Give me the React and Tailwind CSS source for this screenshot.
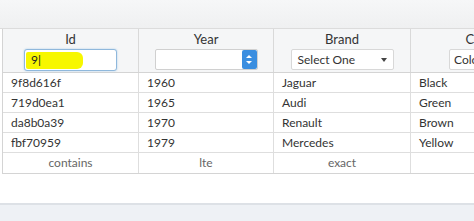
import React from "react";

const rows = [
  ["9f8d616f", "1960", "Jaguar", "Black"],
  ["719d0ea1", "1965", "Audi", "Green"],
  ["da8b0a39", "1970", "Renault", "Brown"],
  ["fbf70959", "1979", "Mercedes", "Yellow"],
];

const cols = "grid grid-cols-[136px_135px_137px_140px]";

export default function App() {
  return (
    <div className="w-[474px] h-[221px] overflow-hidden bg-white flex flex-col" style={{ fontFamily: "Lato, 'Open Sans', sans-serif" }}>
      <div className="h-[29px] shrink-0 bg-gradient-to-b from-[#f6f7f8] to-[#eff0f1] border-b border-[#dcdcdc]" />
      <div className="pl-[2px]">
        <div className="w-[560px] border-l border-[#d4d4d4]">
          <div className={`${cols} h-[44px] bg-[#f5f6f7] border-b border-[#d4d4d4]`}>
            <div className="flex flex-col items-center border-r border-[#d9d9d9] pt-[3px]">
              <div className="text-[13px] leading-[15px] text-[#333]">Id</div>
              <div className="relative mt-[2px] w-[93px] h-[22px] bg-white border border-[#8fb8dc] rounded-[3px] shadow-[0_0_2px_#a9cbe8] flex items-center">
                <div className="absolute left-[1px] top-[2px] w-[57px] h-[17px] bg-[#f7f700] rounded-l-[2px] rounded-r-[6px]" />
                <span className="relative pl-[6px] text-[12px] text-[#222]">9|</span>
              </div>
            </div>
            <div className="flex flex-col items-center border-r border-[#d9d9d9] pt-[3px]">
              <div className="text-[13px] leading-[15px] text-[#333]">Year</div>
              <div className="mt-[2px] w-[103px] h-[21px] bg-white border border-[#d0d0d0] rounded-[2px] flex justify-end">
                <div className="w-[15px] h-full bg-[#3a8ee0] rounded-[2px] flex flex-col items-center justify-center gap-[3px]">
                  <div className="w-0 h-0 border-l-[3px] border-r-[3px] border-b-[3px] border-l-transparent border-r-transparent border-b-white" />
                  <div className="w-0 h-0 border-l-[3px] border-r-[3px] border-t-[3px] border-l-transparent border-r-transparent border-t-white" />
                </div>
              </div>
            </div>
            <div className="flex flex-col items-center border-r border-[#d9d9d9] pt-[3px]">
              <div className="text-[13px] leading-[15px] text-[#333]">Brand</div>
              <div className="mt-[2px] w-[103px] h-[21px] bg-white border border-[#d8d8d8] rounded-[2px] flex items-center justify-between px-[6px]">
                <span className="text-[12px] text-[#333]">Select One</span>
                <div className="w-0 h-0 border-l-[3px] border-r-[3px] border-t-[4px] border-l-transparent border-r-transparent border-t-[#444]" />
              </div>
            </div>
            <div className="flex flex-col items-center pt-[3px]">
              <div className="text-[13px] leading-[15px] text-[#333]">Color</div>
              <div className="mt-[2px] w-[64px] h-[21px] bg-white border border-[#d8d8d8] rounded-[2px] flex items-center px-[4px] overflow-hidden">
                <span className="text-[12px] text-[#333] whitespace-nowrap">Color</span>
              </div>
            </div>
          </div>
          {rows.map((r, i) => (
            <div key={i} className={`${cols} h-[20px] border-b border-[#dedede] text-[12px] text-[#333]`}>
              {r.map((c, j) => (
                <div key={j} className={`flex items-center pl-[8px] ${j < 3 ? "border-r border-[#dedede]" : ""}`}>{c}</div>
              ))}
            </div>
          ))}
          <div className={`${cols} h-[21px] border-b border-[#d4d4d4] text-[12px] text-[#666]`}>
            <div className="flex items-center justify-center border-r border-[#dedede]">contains</div>
            <div className="flex items-center justify-center border-r border-[#dedede]">lte</div>
            <div className="flex items-center justify-center border-r border-[#dedede]">exact</div>
            <div />
          </div>
        </div>
      </div>
      <div className="h-[29px] shrink-0" />
      <div className="flex-1 bg-[#eef1f5] border-t-2 border-[#dde1e6]" />
    </div>
  );
}
